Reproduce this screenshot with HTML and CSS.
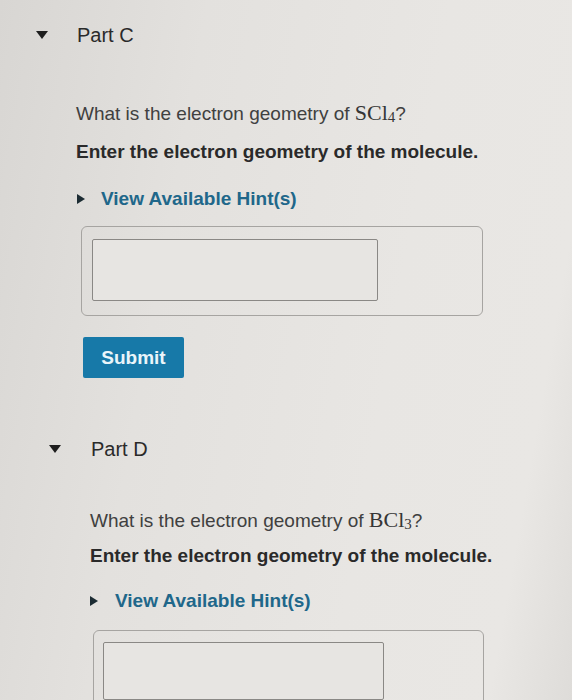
FILE: index.html
```html
<!DOCTYPE html>
<html>
<head>
<meta charset="utf-8">
<link rel="stylesheet" href="styles.css">
</head>
<body>
<div class="page">
  <section class="part part-c">
    <div class="part-head">
      <span class="caret-down"></span>
      <span class="part-title">Part C</span>
    </div>
    <div class="part-body">
      <p class="question">What is the electron geometry of <span class="chem">SCl<sub>4</sub></span>?</p>
      <p class="instr">Enter the electron geometry of the molecule.</p>
      <div class="hint"><span class="caret-right"></span><span class="hint-text">View Available Hint(s)</span></div>
      <div class="answer-box"><div class="answer-input"></div></div>
      <button class="submit">Submit</button>
    </div>
  </section>
  <section class="part part-d">
    <div class="part-head">
      <span class="caret-down"></span>
      <span class="part-title">Part D</span>
    </div>
    <div class="part-body">
      <p class="question">What is the electron geometry of <span class="chem">BCl<sub>3</sub></span>?</p>
      <p class="instr">Enter the electron geometry of the molecule.</p>
      <div class="hint"><span class="caret-right"></span><span class="hint-text">View Available Hint(s)</span></div>
      <div class="answer-box"><div class="answer-input"></div></div>
    </div>
  </section>
</div>
</body>
</html>
```
FILE: styles.css
```css
html, body {
  margin: 0;
  padding: 0;
}
body {
  width: 572px;
  height: 700px;
  overflow: hidden;
  background: linear-gradient(100deg, #d8d6d3 0%, #e3e1de 30%, #e8e6e3 65%, #e9e7e4 88%, #dedcd9 100%);
  font-family: "Liberation Sans", Arial, sans-serif;
  color: #2e2e2e;
}
.page {
  padding-top: 23px;
}
.part-head {
  display: flex;
  align-items: center;
  height: 24px;
}
.caret-down {
  width: 0;
  height: 0;
  border-left: 6px solid transparent;
  border-right: 6px solid transparent;
  border-top: 8px solid #1e1e1e;
}
.part-title {
  font-size: 20px;
  line-height: 24px;
  color: #2a2a2a;
}
.part-c .part-head { margin-left: 36px; }
.part-c .part-title { margin-left: 29px; }
.part-c .part-body { margin-left: 76px; padding-top: 54px; }
.part-d { margin-top: 59px; }
.part-d .part-head { margin-left: 49px; }
.part-d .part-title { margin-left: 30px; }
.part-d .part-body { margin-left: 90px; padding-top: 47px; }

.question {
  margin: 0;
  font-size: 19px;
  line-height: 24px;
  color: #404040;
}
.chem {
  font-family: "Liberation Serif", "Times New Roman", serif;
  font-size: 22px;
  color: #363636;
}
.chem sub {
  font-size: 15px;
  line-height: 0;
  vertical-align: -2px;
}
.instr {
  margin: 14px 0 0 0;
  font-size: 19px;
  line-height: 24px;
  font-weight: bold;
  color: #2a2a2a;
}
.part-d .instr { margin-top: 11px; }
.hint {
  display: flex;
  align-items: center;
  margin-top: 23px;
  height: 24px;
}
.part-d .hint { margin-top: 21px; }
.caret-right {
  width: 0;
  height: 0;
  border-top: 5px solid transparent;
  border-bottom: 5px solid transparent;
  border-left: 8px solid #1c2c33;
  margin-left: 1px;
}
.hint-text {
  margin-left: 16px;
  font-size: 19px;
  line-height: 24px;
  font-weight: bold;
  color: #20678a;
}
.part-d .caret-right { margin-left: 0; }
.part-d .hint-text { margin-left: 17px; }
.answer-box {
  margin-top: 15px;
  margin-left: 5px;
  width: 402px;
  height: 90px;
  border: 1px solid #a6a4a1;
  border-radius: 6px;
  box-sizing: border-box;
  padding: 12px 0 0 10px;
}
.part-d .answer-box {
  margin-top: 17px;
  margin-left: 3px;
  width: 391px;
  padding: 11px 0 0 9px;
}
.answer-input {
  width: 286px;
  height: 62px;
  border: 1px solid #8a8885;
  border-radius: 2px;
  box-sizing: border-box;
  background: #e7e5e2;
}
.part-d .answer-input {
  width: 281px;
  height: 58px;
}
.submit {
  display: block;
  margin-top: 21px;
  margin-left: 7px;
  width: 101px;
  height: 41px;
  border: none;
  border-radius: 2px;
  background: #1779a8;
  color: #eaf5fa;
  font-family: "Liberation Sans", Arial, sans-serif;
  font-size: 19px;
  font-weight: bold;
  padding: 0;
}
```
